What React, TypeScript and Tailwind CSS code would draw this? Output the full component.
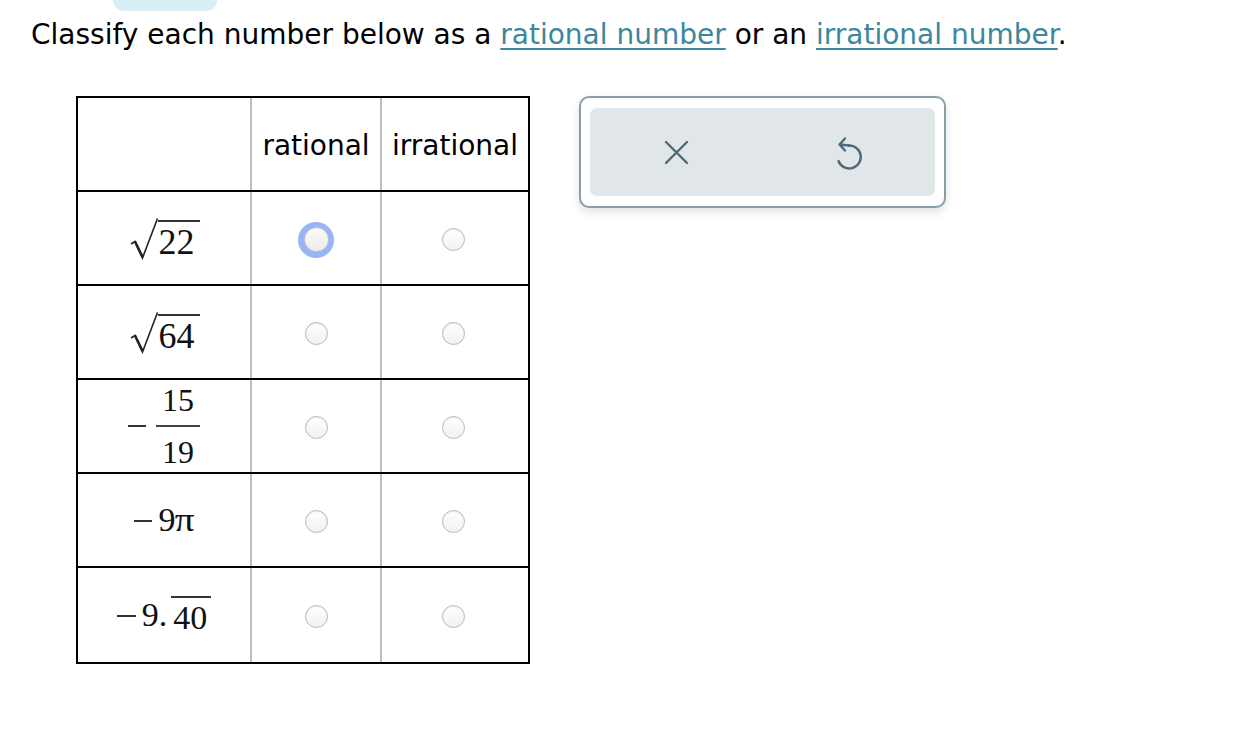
import React from "react";

const rows = ["sqrt22", "sqrt64", "frac", "pi", "repeat"];

const Radio = ({ focused }: { focused?: boolean }) => {
  if (focused) {
    return (
      <div className="flex h-[36px] w-[36px] items-center justify-center rounded-full bg-[#97b5f4]">
        <div className="h-[25px] w-[25px] rounded-full border border-[#c4c4c4] bg-gradient-to-b from-[#fafafa] to-[#ececec]" />
      </div>
    );
  }
  return (
    <div className="h-[23px] w-[23px] rounded-full border border-[#b9b9b9] bg-gradient-to-b from-white to-[#f1f1f1] shadow-[inset_0_1px_1px_rgba(0,0,0,0.08)]" />
  );
};

const Radical = ({ n }: { n: string }) => (
  <div className="flex items-end">
    <svg width="30" height="44" viewBox="0 0 30 44" className="-mr-[1px]">
      <path d="M2 28 L6 25.5 L13.5 42 L28.5 2.5" fill="none" stroke="#222" strokeWidth="1.6" strokeLinejoin="miter" />
      <path d="M6 25.5 L13.5 41" fill="none" stroke="#222" strokeWidth="2.6" />
    </svg>
    <span className="border-t-[2px] border-[#333] pt-[2px] pr-[5px] pl-[1px] text-[36px] leading-[36px]">{n}</span>
  </div>
);

const MathCell = ({ kind }: { kind: string }) => {
  if (kind === "sqrt22") return <Radical n="22" />;
  if (kind === "sqrt64") return <Radical n="64" />;
  if (kind === "frac")
    return (
      <div className="flex items-center gap-[10px]">
        <span className="block h-[2px] w-[18px] bg-[#333]" />
        <div className="flex flex-col items-center">
          <span className="text-[32px] leading-[30px]">15</span>
          <span className="my-[10px] block h-[2px] w-[44px] bg-[#444]" />
          <span className="text-[32px] leading-[30px]">19</span>
        </div>
      </div>
    );
  if (kind === "pi")
    return (
      <div className="flex items-center text-[34px] leading-none">
        <span className="mr-[6px] mt-[2px] block h-[2px] w-[18px] bg-[#333]" />
        <span>9</span>
        <span className="ml-[1px] scale-x-[1.15]">π</span>
      </div>
    );
  return (
    <div className="flex items-center text-[34px] leading-none">
      <span className="mr-[6px] mt-[2px] block h-[2px] w-[19px] bg-[#333]" />
      <span>9.</span>
      <span className="ml-[4px] border-t-[2px] border-[#333] pl-[2px] pr-[4px] pt-[3px]">40</span>
    </div>
  );
};

export default function App() {
  return (
    <div className="min-h-[750px] bg-white font-['DejaVu_Sans',Verdana,sans-serif] text-black">
      <div className="ml-[113px] h-[11px] w-[104px] rounded-b-[14px] bg-[#d6eef4]" />

      <p className="ml-[31px] mt-[5px] text-[28px] leading-[38px]">
        Classify each number below as a{" "}
        <a className="text-[#3b879d] underline decoration-[2px] underline-offset-[4px]">rational number</a> or an{" "}
        <a className="text-[#3b879d] underline decoration-[2px] underline-offset-[4px]">irrational number</a>.
      </p>

      <div className="ml-[76px] mt-[42px] flex items-start gap-[49px]">
        <div className="w-[454px] border-2 border-black">
          <div className="flex h-[94px] border-b-2 border-black">
            <div className="w-[174px] border-r-2 border-[#bdbdbd]" />
            <div className="flex w-[130px] items-center justify-center border-r-2 border-[#bdbdbd] pt-[3px] text-[28px]">rational</div>
            <div className="flex flex-1 items-center justify-center pt-[3px] text-[28px]">irrational</div>
          </div>
          {rows.map((kind, i) => (
            <div key={kind} className={`flex h-[94px] ${i < rows.length - 1 ? "border-b-2 border-black" : ""}`}>
              <div className="flex w-[174px] items-center justify-center border-r-2 border-[#bdbdbd] font-['Liberation_Serif','Times_New_Roman',serif] text-[#111]">
                <MathCell kind={kind} />
              </div>
              <div className="flex w-[130px] items-center justify-center border-r-2 border-[#bdbdbd] pt-[3px]">
                <Radio focused={i === 0} />
              </div>
              <div className="flex flex-1 items-center justify-center pt-[3px] pr-[3px]">
                <Radio />
              </div>
            </div>
          ))}
        </div>

        <div className="w-[367px] rounded-[10px] border-2 border-[#8a9ea8] bg-white px-[9px] py-[10px] shadow-[0_4px_10px_rgba(0,0,0,0.12)]">
          <div className="flex h-[88px] items-center rounded-[7px] bg-[#e1e6e9]">
            <div className="flex flex-1 items-center justify-center">
              <svg width="25" height="25" viewBox="0 0 25 25">
                <path d="M2 2 L23 23 M23 2 L2 23" stroke="#4b6b78" strokeWidth="2.4" strokeLinecap="round" />
              </svg>
            </div>
            <div className="flex flex-1 items-center justify-center">
              <svg width="34" height="38" viewBox="0 0 34 38">
                <path d="M17 12.5 A11.5 11.5 0 1 1 6.5 28" fill="none" stroke="#4b6b78" strokeWidth="2.4" strokeLinecap="round" />
                <path d="M17 12.5 L8 11.5 M13 5.5 L7.5 11.5 L13 17.5" fill="none" stroke="#4b6b78" strokeWidth="2.4" strokeLinecap="round" strokeLinejoin="round" />
              </svg>
            </div>
          </div>
        </div>
      </div>
    </div>
  );
}
